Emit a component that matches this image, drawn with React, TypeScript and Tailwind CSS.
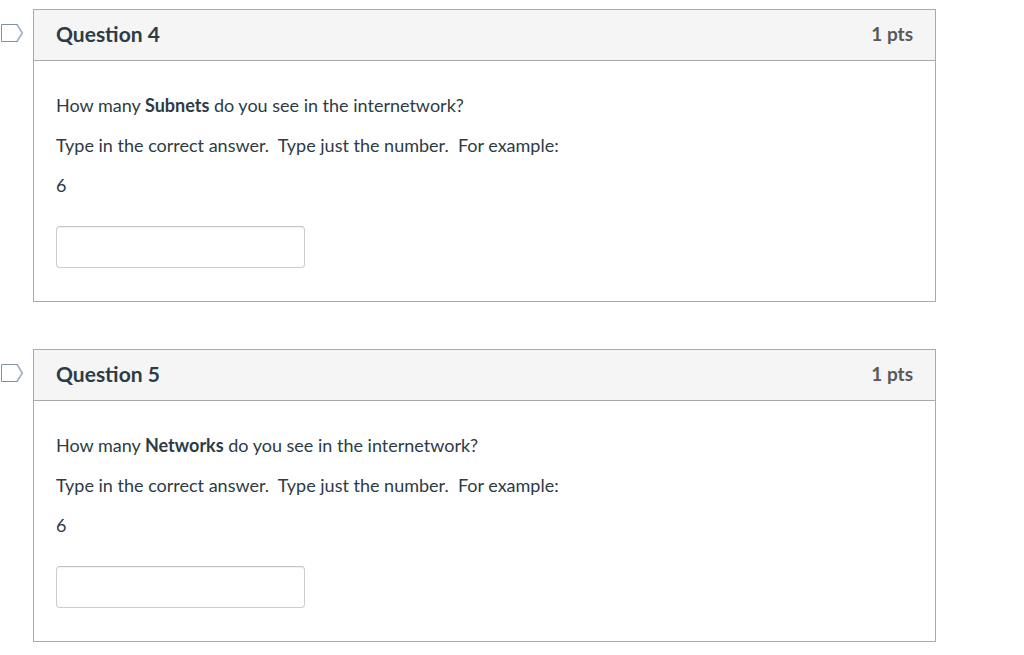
type Question = {
  id: number;
  subject: string;
  points: number;
  example: string;
};

const questions: Question[] = [
  { id: 4, subject: "Subnets", points: 1, example: "6" },
  { id: 5, subject: "Networks", points: 1, example: "6" },
];

function FlagButton({ id }: { id: number }) {
  return (
    <button type="button" aria-label={`Flag question ${id}`} className="mt-[14px] w-6 h-5 shrink-0">
      <svg viewBox="0 0 24 20" width="24" height="20" fill="none">
        <path d="M17 1.5L22.3 10L17 18.5" stroke="#9fb1c3" strokeWidth="1.6" />
        <path d="M17.5 1.5H1.5V18.5H17.5" stroke="#7b93aa" strokeWidth="1" />
      </svg>
    </button>
  );
}

function QuestionCard({ question }: { question: Question }) {
  const inputId = `answer-${question.id}`;
  return (
    <div className="flex items-start gap-[9px]">
      <FlagButton id={question.id} />
      <section className="flex-1 border border-[#aaaaaa] bg-white">
        <header className="flex items-center justify-between px-[22px] pt-3 pb-[14px] bg-[#f5f5f5] border-b border-[#aaaaaa]">
          <h2 className="text-[21px] leading-6 font-bold">Question {question.id}</h2>
          <span className="text-[19px] leading-6 font-bold text-[#595959]">{question.points} pts</span>
        </header>
        <div className="px-[22px] pt-8 pb-[33px]">
          <label htmlFor={inputId} className="flex flex-col gap-4 text-lg leading-6">
            <p>
              How many <strong className="font-bold">{question.subject}</strong> do you see in the internetwork?
            </p>
            <p>Type in the correct answer.&nbsp; Type just the number.&nbsp; For example:</p>
            <p>{question.example}</p>
          </label>
          <input
            id={inputId}
            type="text"
            className="block mt-[29px] w-[249px] h-[42px] px-3 text-lg rounded-[4px] border border-[#cccccc] border-t-[#c4c4c4] shadow-[inset_0_1px_1px_rgba(0,0,0,0.06)] outline-none"
          />
        </div>
      </section>
    </div>
  );
}

export default function App() {
  return (
    <main className="flex flex-col gap-[47px] pt-[9px] pr-[88px] text-[#2d3b45] bg-white font-['Lato',sans-serif]">
      {questions.map((question) => (
        <QuestionCard key={question.id} question={question} />
      ))}
    </main>
  );
}
